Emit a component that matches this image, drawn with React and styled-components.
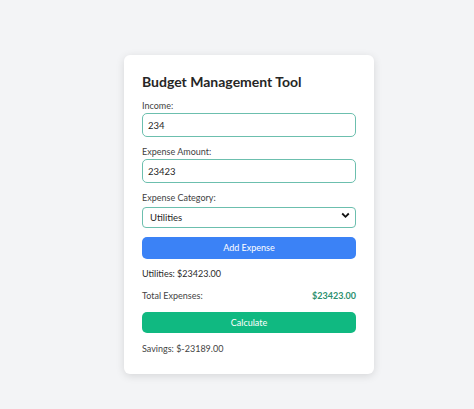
import React, { useState } from "react";
import styled, { createGlobalStyle } from "styled-components";

const Global = createGlobalStyle`
  html, body { margin: 0; padding: 0; background: #f3f4f6; }
  body { font-family: Lato, "Open Sans", sans-serif; color: #333; }
  * { box-sizing: border-box; }
`;

const Page = styled.div`
  width: 474px;
  height: 409px;
  display: flex;
  justify-content: flex-start;
  padding-top: 55px;
  padding-left: 124px;
`;

const Card = styled.div`
  width: 250px;
  height: 319px;
  background: #fff;
  border-radius: 6px;
  box-shadow: 0 2px 8px rgba(0, 0, 0, 0.12);
  padding: 17px 18px 18px;
  display: flex;
  flex-direction: column;
`;

const Title = styled.h1`
  margin: 0 0 7px;
  font-size: 14px;
  line-height: 20px;
  font-weight: 700;
  color: #262626;
`;

const Field = styled.div`
  display: flex;
  flex-direction: column;
  margin-bottom: ${(p) => p.$mb || 8}px;
`;

const Label = styled.label`
  font-size: 9px;
  line-height: 14px;
  color: #3f3f3f;
`;

const Input = styled.input`
  height: ${(p) => p.$h || 24}px;
  width: 100%;
  border: 1.5px solid #6cbfae;
  border-radius: 5px;
  padding: 0 5px;
  font-family: inherit;
  font-size: 9.5px;
  color: #1f1f1f;
  outline: none;
  background: #fff;
`;

const SelectWrap = styled.div`
  position: relative;
`;

const Select = styled.select`
  appearance: none;
  height: 21px;
  width: 100%;
  border: 1.5px solid #6cbfae;
  border-radius: 4px;
  padding: 0 7px;
  font-family: inherit;
  font-size: 9.5px;
  color: #1f1f1f;
  background: #fff;
  outline: none;
`;

const Chevron = styled.svg`
  position: absolute;
  right: 6px;
  top: 7px;
  pointer-events: none;
`;

const Button = styled.button`
  height: ${(p) => p.$h}px;
  width: 100%;
  border: none;
  border-radius: 5px;
  background: ${(p) => p.$bg};
  color: #fff;
  font-family: inherit;
  font-size: 9px;
  cursor: pointer;
  margin-bottom: ${(p) => p.$mb}px;
`;

const Line = styled.div`
  display: flex;
  justify-content: space-between;
  font-size: 9px;
  line-height: 14px;
  color: ${(p) => p.$c || "#2a2a2a"};
  margin-bottom: ${(p) => p.$mb || 0}px;
`;

const Value = styled.span`
  color: #2c8f6e;
  font-weight: 700;
`;

export default function App() {
  const [income, setIncome] = useState("234");
  const [amount, setAmount] = useState("23423");
  const [cat, setCat] = useState("Utilities");
  return (
    <>
      <Global />
      <Page>
        <Card>
          <Title>Budget Management Tool</Title>
          <Field>
            <Label>Income:</Label>
            <Input value={income} onChange={(e) => setIncome(e.target.value)} />
          </Field>
          <Field>
            <Label>Expense Amount:</Label>
            <Input value={amount} onChange={(e) => setAmount(e.target.value)} />
          </Field>
          <Field $mb={9}>
            <Label>Expense Category:</Label>
            <SelectWrap>
              <Select value={cat} onChange={(e) => setCat(e.target.value)}>
                <option>Utilities</option>
                <option>Food</option>
                <option>Rent</option>
              </Select>
              <Chevron width="9" height="7" viewBox="0 0 9 7">
                <path d="M1.2 1.5 L4.5 4.8 L7.8 1.5" fill="none" stroke="#111" strokeWidth="1.8" />
              </Chevron>
            </SelectWrap>
          </Field>
          <Button $bg="#3b82f6" $h={23} $mb={8}>Add Expense</Button>
          <Line $mb={8}>Utilities: $23423.00</Line>
          <Line $mb={9} $c="#444">
            <span>Total Expenses:</span>
            <Value>$23423.00</Value>
          </Line>
          <Button $bg="#10b981" $h={22} $mb={9}>Calculate</Button>
          <Line $c="#444">Savings: $-23189.00</Line>
        </Card>
      </Page>
    </>
  );
}
